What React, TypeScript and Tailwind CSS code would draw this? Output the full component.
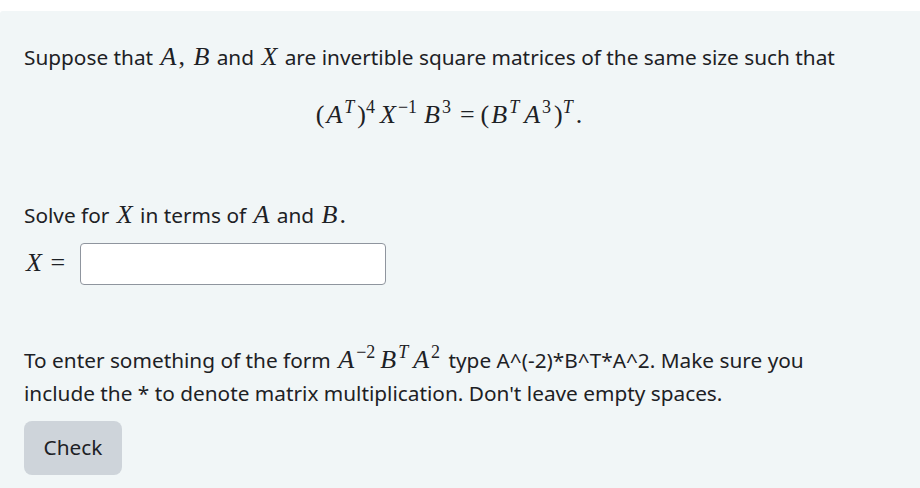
import React from 'react'

const mathFont = { fontFamily: '"Liberation Serif", "DejaVu Serif", serif' }

function V({ children }: { children: React.ReactNode }) {
  return (
    <span className="italic text-[26px] leading-none px-[2px]" style={mathFont}>
      {children}
    </span>
  )
}

function R({ children }: { children: React.ReactNode }) {
  return (
    <span className="text-[26px] leading-none" style={mathFont}>
      {children}
    </span>
  )
}

function Sup({ children, italic }: { children: React.ReactNode; italic?: boolean }) {
  return (
    <span
      className={`align-[10px] text-[18px] leading-none pr-[3px] ${italic ? 'italic' : ''}`}
      style={mathFont}
    >
      {children}
    </span>
  )
}

export default function App() {
  return (
    <div className="min-h-screen bg-white pt-[11px]" style={{ fontFamily: '"Noto Sans", "Open Sans", sans-serif' }}>
      <div className="min-h-[477px] rounded-tl-[3px] bg-[#f1f6f7] px-6 pt-[31px] text-[20.8px] text-[#1d2125]">
        <p className="leading-[30px]">
          Suppose that <V>A</V>
          <R>,&nbsp;</R>
          <V>B</V> and <V>X</V> are invertible square matrices of the same size such that
        </p>

        <div className="mt-[26px] flex justify-center">
          <div className="pr-[22px] leading-[30px]">
            <R>(</R>
            <V>A</V>
            <Sup italic>T</Sup>
            <R>)</R>
            <Sup>4</Sup>
            <V>X</V>
            <Sup>−1</Sup>
            <span className="pl-[2px]" />
            <V>B</V>
            <Sup>3</Sup>
            <R>
              <span className="px-[6px]">=</span>(
            </R>
            <V>B</V>
            <Sup italic>T</Sup>
            <V>A</V>
            <Sup>3</Sup>
            <R>)</R>
            <Sup italic>T</Sup>
            <R>.</R>
          </div>
        </div>

        <p className="mt-[70px] leading-[30px]">
          Solve for <V>X</V> in terms of <V>A</V> and <V>B</V>
          <R>.</R>
        </p>

        <div className="mt-[13px] flex items-center gap-[8px]">
          <span className="w-[48px] whitespace-nowrap">
            <V>X</V>
            <R> =</R>
          </span>
          <input className="h-[42px] w-[306px] rounded-[4px] border border-[#8f959e] bg-white px-3 outline-none" />
        </div>

        <p className="mt-[58px] max-w-[840px] leading-[33px]">
          To enter something of the form <V>A</V>
          <Sup>−2</Sup>
          <V>B</V>
          <Sup italic>T</Sup>
          <V>A</V>
          <Sup>2</Sup> type A^(-2)*B^T*A^2. Make sure you include the * to denote matrix multiplication. Don't leave empty spaces.
        </p>

        <button className="mt-[11px] h-[54px] w-[98px] rounded-[8px] bg-[#ced4da] text-[20.8px] text-[#1d2125]">
          Check
        </button>
      </div>
    </div>
  )
}
